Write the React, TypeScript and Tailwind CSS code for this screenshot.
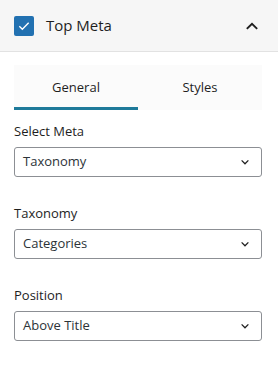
import React from "react";

function Chevron({ up = false, size = 14, stroke = 2 }: { up?: boolean; size?: number; stroke?: number }) {
  return (
    <svg width={size} height={size} viewBox="0 0 24 24" fill="none" stroke="#1e1e1e" strokeWidth={stroke} strokeLinecap="square">
      {up ? <path d="M6 15l6-6 6 6" /> : <path d="M7 10l5 5 5-5" />}
    </svg>
  );
}

function Field({ label, value }: { label: string; value: string }) {
  return (
    <div className="flex flex-col">
      <div className="text-[13px] leading-[18px] font-medium text-[#1e1e1e] mb-[7px]">{label}</div>
      <div className="h-[30px] border border-[#8c8f94] rounded-[3px] bg-white flex items-center justify-between pl-[8px] pr-[9px]">
        <span className="text-[13px] text-[#2c3338]">{value}</span>
        <Chevron size={14} stroke={2.2} />
      </div>
    </div>
  );
}

export default function App() {
  return (
    <div className="w-[278px] h-[371px] bg-white" style={{ fontFamily: '"Open Sans", "Noto Sans", sans-serif' }}>
      <div className="h-[52px] bg-[#f6f6f6] border-b border-[#e2e2e2] flex items-center px-[14px]">
        <div className="w-[20px] h-[20px] rounded-[2px] bg-[#2271b1] flex items-center justify-center">
          <svg width="16" height="16" viewBox="0 0 24 24" fill="none" stroke="white" strokeWidth="2">
            <path d="M5 12.5l4.5 4.5L19 7" />
          </svg>
        </div>
        <span className="ml-[12px] text-[15px] text-[#1e1e1e]">Top Meta</span>
        <div className="ml-auto mr-[3px] flex items-center">
          <Chevron up size={18} stroke={2.5} />
        </div>
      </div>
      <div className="pl-[14px] pr-[16px] pt-[13px]">
        <div className="flex bg-[#fbfbfb] h-[45px]">
          <div className="flex-1 flex items-center justify-center text-[13px] text-[#1e1e1e] border-b-[3px] border-[#1e7a9a] pt-[3px]">
            General
          </div>
          <div className="flex-1 flex items-center justify-center text-[13px] text-[#1e1e1e] border-b-[3px] border-transparent pt-[3px]">
            Styles
          </div>
        </div>
        <div className="flex flex-col gap-[27px] mt-[12px]">
          <Field label="Select Meta" value="Taxonomy" />
          <Field label="Taxonomy" value="Categories" />
          <Field label="Position" value="Above Title" />
        </div>
      </div>
    </div>
  );
}
